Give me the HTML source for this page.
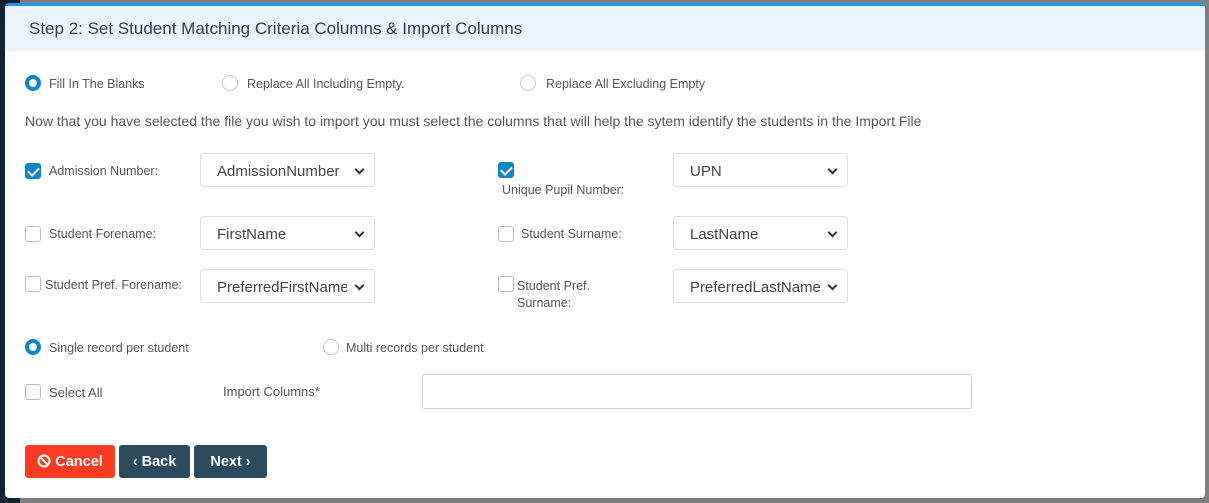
<!DOCTYPE html>
<html><head><style>
*{box-sizing:border-box;margin:0;padding:0}
body{width:1209px;height:503px;background:#7f7f7f;font-family:"Liberation Sans",sans-serif;position:relative;overflow:hidden}
.side{position:absolute;left:0;top:0;width:20px;height:503px;background:#0f2236}
.m{position:absolute;left:5px;top:3px;width:1200px;height:495px;background:#fff;border-top:3px solid #2196f3;border-radius:4px;overflow:hidden}
.hd{position:absolute;left:0;top:0;width:100%;height:45px;background:#ebf4fe}
.a{position:absolute;white-space:nowrap}
.t{font-size:17px;color:#2d3e50}
.l{font-size:12.5px;color:#555}
.rad{position:absolute;width:16px;height:16px;border-radius:50%;border:1px solid #ccc;background:#fff}
.rad.on{border:4px solid #0b86c8}
.cb{position:absolute;width:16px;height:16px;border-radius:3px;border:1px solid #bbb;background:#fff}
.cb.on{background:#0b86c8;border-color:#0b86c8}
.cb.on:after{content:"";position:absolute;left:4px;top:1px;width:5px;height:9px;border:solid #fff;border-width:0 2px 2px 0;transform:rotate(45deg)}
.sel{position:absolute;width:175px;height:34px;border:1px solid #ddd;border-radius:4px;font-size:15px;color:#444;padding:9px 0 0 16px;overflow:hidden;white-space:nowrap}
.sel span{display:block;width:130px;overflow:hidden}
.sel:after{content:"";position:absolute;right:11px;top:12px;width:5px;height:5px;border:solid #333;border-width:0 2px 2px 0;transform:rotate(45deg)}
.btn{position:absolute;top:439px;height:33px;border-radius:3px;color:#fff;font-size:14.5px;font-weight:bold;padding-top:9px;text-align:center}
</style></head><body>
<div class="side"></div>
<div class="m">
<div class="hd"></div>
<div class="a t" style="left:24px;top:13px">Step 2: Set Student Matching Criteria Columns &amp; Import Columns</div>

<div class="rad on" style="left:20px;top:69px"></div><div class="a l" style="left:44px;top:71px">Fill In The Blanks</div>
<div class="rad" style="left:217px;top:69px"></div><div class="a l" style="left:242px;top:71px">Replace All Including Empty.</div>
<div class="rad" style="left:515px;top:69px"></div><div class="a l" style="left:541px;top:71px">Replace All Excluding Empty</div>

<div class="a" style="left:20px;top:107px;font-size:14px;color:#555">Now that you have selected the file you wish to import you must select the columns that will help the sytem identify the students in the Import File</div>

<div class="cb on" style="left:20px;top:157px"></div><div class="a l" style="left:44px;top:158px">Admission Number:</div>
<div class="sel" style="left:195px;top:147px"><span>AdmissionNumber</span></div>
<div class="cb on" style="left:493px;top:156px"></div><div class="a l" style="left:497px;top:177px">Unique Pupil Number:</div>
<div class="sel" style="left:668px;top:147px"><span>UPN</span></div>

<div class="cb" style="left:20px;top:220px"></div><div class="a l" style="left:44px;top:221px">Student Forename:</div>
<div class="sel" style="left:195px;top:210px"><span>FirstName</span></div>
<div class="cb" style="left:493px;top:220px"></div><div class="a l" style="left:516px;top:221px">Student Surname:</div>
<div class="sel" style="left:668px;top:210px"><span>LastName</span></div>

<div class="cb" style="left:20px;top:270px"></div><div class="a l" style="left:40px;top:272px">Student Pref. Forename:</div>
<div class="sel" style="left:195px;top:263px"><span>PreferredFirstName</span></div>
<div class="cb" style="left:493px;top:270px"></div><div class="a l" style="left:512px;top:272px;line-height:17px">Student Pref.<br>Surname:</div>
<div class="sel" style="left:668px;top:263px"><span>PreferredLastName</span></div>

<div class="rad on" style="left:20px;top:333px"></div><div class="a l" style="left:44px;top:335px">Single record per student</div>
<div class="rad" style="left:318px;top:333px"></div><div class="a l" style="left:341px;top:335px">Multi records per student</div>

<div class="cb" style="left:20px;top:378px"></div><div class="a" style="left:44px;top:379px;font-size:13px;color:#555">Select All</div>
<div class="a" style="left:218px;top:378px;font-size:13px;color:#555">Import Columns*</div>
<div class="a" style="left:417px;top:368px;width:550px;height:35px;border:1px solid #ccc;border-radius:3px"></div>

<div class="btn" style="left:20px;width:90px;background:#fd3a22">
<svg width="14" height="14" viewBox="0 0 14 14" style="vertical-align:-2px"><circle cx="7" cy="7" r="5.5" fill="none" stroke="#fff" stroke-width="2"/><line x1="3" y1="3" x2="11" y2="11" stroke="#fff" stroke-width="2"/></svg> Cancel</div>
<div class="btn" style="left:114px;width:71px;background:#2c4a5e">&#x2039; Back</div>
<div class="btn" style="left:189px;width:73px;background:#2c4a5e">Next &#x203A;</div>
</div>
</body></html>
